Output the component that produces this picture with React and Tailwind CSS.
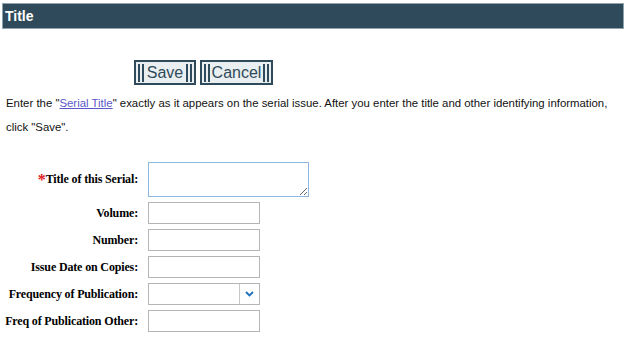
const rows = [
  { label: 'Volume:' },
  { label: 'Number:' },
  { label: 'Issue Date on Copies:' },
  { label: 'Frequency of Publication:', select: true },
  { label: 'Freq of Publication Other:' },
]

function Bars() {
  return (
    <span className="flex h-[18px] gap-[2px]">
      <span className="w-[2px] bg-[#2f4a5a]" />
      <span className="w-[2px] bg-[#2f4a5a]" />
    </span>
  )
}

function PageButton({ children, width }) {
  return (
    <button
      className={`flex h-[25px] items-center justify-between border-2 border-[#2f4a5a] bg-[#e9eef0] px-[2px] text-[16px] leading-none text-[#2f4a5a] ${width}`}
    >
      <Bars />
      <span>{children}</span>
      <Bars />
    </button>
  )
}

export default function App() {
  return (
    <div className="h-[343px] w-[624px] bg-white pt-[3px] font-['Liberation_Sans',Arial,sans-serif]">
      {/* Header bar */}
      <div className="ml-[2px] flex h-[26px] items-center border border-[#8fa3ad] bg-[#2f4a5a] pl-[2px]">
        <span className="text-[14px] font-bold text-white">Title</span>
      </div>

      {/* Save / Cancel */}
      <div className="mt-[31px] flex gap-[4px] pl-[134px]">
        <PageButton width="w-[62px]">Save</PageButton>
        <PageButton width="w-[73px]">Cancel</PageButton>
      </div>

      {/* Instructions */}
      <p className="mt-[6px] whitespace-nowrap pl-[6px] text-[11.4px] leading-[24px] text-[#111]">
        Enter the "<a href="#" className="text-[#5b57c9] underline">Serial Title</a>" exactly as it appears on the serial issue. After you enter the title and other identifying information,
        <br />
        click "Save".
      </p>

      {/* Form */}
      <div className="mt-[23px] flex flex-col gap-[5px] font-['Liberation_Serif',serif] text-[12px] font-bold tracking-[-0.15px] text-black">
        <div className="flex items-center">
          <label className="w-[138px] text-right">
            <span className="align-[-2px] text-[16px] text-[#e02020]">*</span>Title of this Serial:
          </label>
          <textarea className="ml-[10px] h-[35px] w-[161px] resize-y border border-[#8db8e0] bg-white outline-none" />
        </div>
        {rows.map((r) => (
          <div key={r.label} className="flex items-center">
            <label className="w-[138px] text-right">{r.label}</label>
            {r.select ? (
              <div className="ml-[10px] flex h-[22px] w-[112px] border border-[#b5b5b5] bg-white">
                <div className="flex-1" />
                <div className="flex w-[20px] items-center justify-center border-l border-[#c8c8c8]">
                  <svg width="9" height="6" viewBox="0 0 9 6">
                    <path d="M1 1l3.5 3.5L8 1" fill="none" stroke="#1e6fc0" strokeWidth="1.8" />
                  </svg>
                </div>
              </div>
            ) : (
              <input className="ml-[10px] h-[22px] w-[112px] border border-[#b5b5b5] bg-white outline-none" />
            )}
          </div>
        ))}
      </div>
    </div>
  )
}
